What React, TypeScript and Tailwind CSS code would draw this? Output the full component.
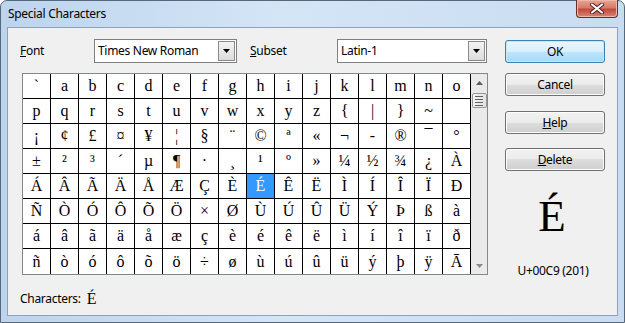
const ui = "font-['Noto_Sans','Open_Sans',sans-serif] tracking-[-0.3px]"
const serif = "font-['Liberation_Serif','Times_New_Roman',serif] tracking-normal"

const rows = [
  '`abcdefghijklmno',
  'pqrstuvwxyz{|}~ ',
  '¡¢£¤¥¦§¨©ª«¬-®¯°',
  '±²³´µ¶·¸¹º»¼½¾¿À',
  'ÁÂÃÄÅÆÇÈÉÊËÌÍÎÏÐ',
  'ÑÒÓÔÕÖ×ØÙÚÛÜÝÞßà',
  'áâãäåæçèéêëìíîïð',
  'ñòóôõö÷øùúûüýþÿĀ',
]

function DropArrow() {
  return (
    <div className="flex h-full w-[17px] items-center justify-center border border-[#8a8a8a] bg-[linear-gradient(#f3f3f3,#dcdcdc)]">
      <svg width="7" height="4" viewBox="0 0 7 4">
        <path d="M0 0h7L3.5 4z" fill="#000" />
      </svg>
    </div>
  )
}

function Combo({ value, width }: { value: string; width: string }) {
  return (
    <div className={`flex h-[24px] items-stretch border border-[#7f7f7f] bg-white p-[1px] ${width}`}>
      <div className="flex flex-1 items-center pl-[2px] text-[12px] text-black">{value}</div>
      <DropArrow />
    </div>
  )
}

function Button({ children, focused }: { children: React.ReactNode; focused?: boolean }) {
  return (
    <div
      className={`flex h-[23px] w-[100px] items-center justify-center rounded-[3px] border text-[12px] text-black ${
        focused
          ? 'border-[#3c7fb1] bg-[linear-gradient(#eaf6fd_0%,#d9f0fc_50%,#bee6fd_50%,#a7d9f5_100%)] shadow-[inset_0_0_0_1px_#c6e8fb]'
          : 'border-[#707070] bg-[linear-gradient(#f2f2f2_0%,#ebebeb_50%,#dddddd_50%,#cfcfcf_100%)] shadow-[inset_0_0_0_1px_#fcfcfc]'
      }`}
    >
      {children}
    </div>
  )
}

function Scrollbar() {
  return (
    <div className="flex w-[16px] flex-col items-center bg-[#eaeaea]">
      <div className="flex h-[17px] w-full items-center justify-center">
        <svg width="7" height="4" viewBox="0 0 7 4">
          <path d="M3.5 0L7 4H0z" fill="#5a5a5a" />
        </svg>
      </div>
      <div className="mt-[2px] flex h-[15px] w-[15px] flex-col items-center justify-center gap-[2px] rounded-[2px] border border-[#979797] bg-[linear-gradient(to_right,#f3f3f3,#e2e2e2)]">
        <div className="h-px w-[8px] bg-[#606060]" />
        <div className="h-px w-[8px] bg-[#606060]" />
        <div className="h-px w-[8px] bg-[#606060]" />
        <div className="h-px w-[8px] bg-[#606060]" />
      </div>
      <div className="flex-1" />
      <div className="flex h-[17px] w-full items-center justify-center">
        <svg width="7" height="4" viewBox="0 0 7 4">
          <path d="M0 0h7L3.5 4z" fill="#8a8a8a" />
        </svg>
      </div>
    </div>
  )
}

function CharGrid() {
  return (
    <div className="ml-[2px] mt-[10px] flex w-fit border border-[#828790] bg-white">
      <div className="flex flex-col">
        {rows.map((row, r) => (
          <div key={r} className={`flex h-[25px] ${r < rows.length - 1 ? 'border-b border-black' : ''}`}>
            {[...row].map((ch, c) => {
              const sel = r === 4 && c === 8
              return (
                <div
                  key={c}
                  className={`flex h-full w-[28px] items-center justify-center border-r border-black text-[16px] leading-none ${serif} ${
                    sel ? 'bg-[#3399ff] text-white' : 'text-black'
                  }`}
                >
                  {ch === ' ' ? '' : ch}
                </div>
              )
            })}
          </div>
        ))}
      </div>
      <Scrollbar />
    </div>
  )
}

function CloseButton() {
  return (
    <div className="-mt-px flex h-[18px] w-[42px] items-center justify-center rounded-b-[4px] border border-t-0 border-[#6b2b24] bg-[linear-gradient(#e8a595_0%,#d87a6a_45%,#c24a3a_55%,#d9867a_100%)] shadow-[inset_0_0_0_1px_#f0b7ab]">
      <svg width="14" height="11" viewBox="0 0 14 11">
        <path d="M2 1.5l10 8M12 1.5l-10 8" stroke="#4a1f1a" strokeWidth="4" strokeLinecap="round" />
        <path d="M2 1.5l10 8M12 1.5l-10 8" stroke="#fff" strokeWidth="2.2" strokeLinecap="round" />
      </svg>
    </div>
  )
}

export default function App() {
  return (
    <div className={`h-[323px] w-[625px] bg-white ${ui}`}>
      <div className="flex h-[323px] w-[625px] flex-col rounded-t-[7px] border border-[#56687c] bg-[linear-gradient(to_right,#bdd4ed,#d4e5f6_45%,#c9dcf1)] px-[6px] pb-[6px]">
        <div className="flex h-[26px] items-start justify-between">
          <div className="pl-px pt-[5px] text-[12px] leading-[16px] text-black">Special Characters</div>
          <CloseButton />
        </div>
        <div className="flex flex-1 border border-[#8ba2bd] bg-[#f0f0f0] pl-[12px] pt-[11px]">
          <div className="flex w-[468px] flex-col">
            <div className="flex h-[24px] items-center text-[12px] text-black">
              <div className="w-[74px]">
                <span className="underline">F</span>ont
              </div>
              <Combo value="Times New Roman" width="w-[143px]" />
              <div className="ml-[13px] w-[87px]">
                <span className="underline">S</span>ubset
              </div>
              <Combo value="Latin-1" width="w-[150px]" />
            </div>
            <CharGrid />
            <div className="mt-[16px] flex h-[16px] items-center text-[12px] text-black">
              <span>Characters:</span>
              <span className={`ml-[6px] text-[16px] ${serif}`}>É</span>
            </div>
          </div>
          <div className="ml-[17px] flex w-[100px] flex-col items-center pt-px">
            <Button focused>OK</Button>
            <div className="mt-[10px]">
              <Button>Cancel</Button>
            </div>
            <div className="mt-[15px]">
              <Button>
                <span className="underline">H</span>elp
              </Button>
            </div>
            <div className="mt-[14px]">
              <Button>
                <span className="underline">D</span>elete
              </Button>
            </div>
            <div className={`mr-[6px] mt-[23px] h-[45px] text-[45px] leading-[45px] text-black ${serif}`}>É</div>
            <div className="mr-[4px] mt-[24px] text-[12px] leading-[16px] text-black">U+00C9 (201)</div>
          </div>
        </div>
      </div>
    </div>
  )
}
